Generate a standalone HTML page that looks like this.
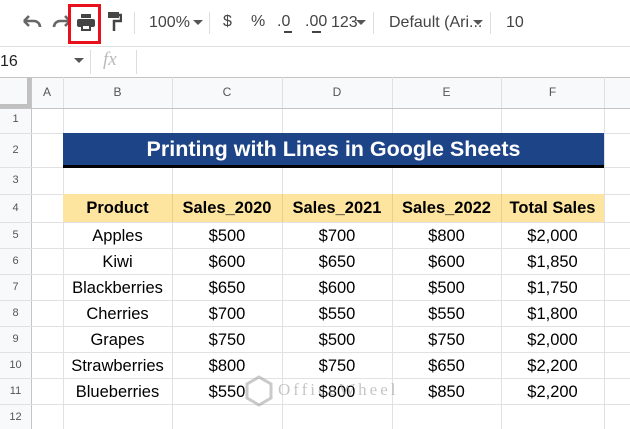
<!DOCTYPE html><html><head><style>
*{margin:0;padding:0;box-sizing:border-box}
body{width:630px;height:429px;overflow:hidden;background:#fff;font-family:"Liberation Sans",Arial,sans-serif;position:relative}
.a{position:absolute}
.tb{color:#444;font-size:16px}
.hl{position:absolute;left:0;width:630px;height:1px;background:#e1e1e1}
.vl{position:absolute;top:77px;height:352px;width:1px;background:#e1e1e1}
.rh{position:absolute;left:0;width:31px;text-align:center;font-size:11px;color:#555}
.ch{position:absolute;top:77px;height:31px;line-height:31px;text-align:center;font-size:12px;color:#555}
.c{position:absolute;text-align:center;font-size:16.5px;color:#000;height:26px;line-height:26px}
</style></head><body>
<div class="a" style="left:0;top:0;width:630px;height:47px;background:#fff;border-bottom:1px solid #e0e0e0"></div>
<svg class="a" style="left:20px;top:12px" width="80" height="22" viewBox="0 0 80 22">
<path d="M4 9 L9 4 M4 9 L9 14 M4 9 H14 a6 6 0 0 1 6 6" stroke="#666" stroke-width="2.6" fill="none"/>
<path d="M54 9 L49 4 M54 9 L49 14 M54 9 H44 a6 6 0 0 0 -6 6" stroke="#666" stroke-width="2.6" fill="none" transform="translate(-4,0)"/>
</svg>
<div class="a" style="left:68px;top:4px;width:33px;height:40px;border:3px solid #e8111b"></div>
<svg class="a" style="left:76px;top:13px" width="20" height="20" viewBox="0 0 20 20"><rect x="5" y="1" width="10" height="4" fill="#444"/><rect x="1" y="6" width="18" height="8" rx="2" fill="#444"/><rect x="5" y="11" width="10" height="7" fill="#444"/><rect x="7" y="13" width="6" height="3" fill="#fff"/></svg>
<svg class="a" style="left:108px;top:12px" width="14" height="22" viewBox="0 0 14 22"><rect x="0" y="0" width="11" height="6" fill="#444"/><path d="M11 3h2v6H6v10" stroke="#444" stroke-width="2.5" fill="none"/></svg>
<div class="a" style="left:134px;top:12px;width:1px;height:22px;background:#ddd"></div>
<div class="a tb" style="left:149px;top:14px">100%</div>
<div class="a" style="left:193px;top:20px;border:5px solid transparent;border-top-color:#555"></div>
<div class="a" style="left:209px;top:12px;width:1px;height:22px;background:#ddd"></div>
<div class="a tb" style="left:223px;top:13px">$</div>
<div class="a tb" style="left:251px;top:13px">%</div>
<div class="a tb" style="left:277px;top:13px">.0</div>
<div class="a" style="left:284px;top:31px;width:8px;height:2px;background:#444"></div>
<div class="a tb" style="left:305px;top:13px">.00</div>
<div class="a" style="left:312px;top:31px;width:9px;height:2px;background:#444"></div>
<div class="a tb" style="left:331px;top:14px">123</div>
<div class="a" style="left:356px;top:20px;border:5px solid transparent;border-top-color:#555"></div>
<div class="a" style="left:373px;top:12px;width:1px;height:22px;background:#ddd"></div>
<div class="a tb" style="left:389px;top:14px">Default (Ari...</div>
<div class="a" style="left:473px;top:20px;border:5px solid transparent;border-top-color:#555"></div>
<div class="a" style="left:490px;top:12px;width:1px;height:22px;background:#ddd"></div>
<div class="a tb" style="left:506px;top:14px">10</div>
<div class="a" style="left:0;top:53px;font-size:16px;color:#222">16</div>
<div class="a" style="left:74px;top:58px;border:5px solid transparent;border-top-color:#555"></div>
<div class="a" style="left:90px;top:50px;width:1px;height:24px;background:#ddd"></div>
<div class="a" style="left:103px;top:49px;font-size:19px;font-style:italic;color:#bbb;font-family:'Liberation Serif',serif">fx</div>
<div class="a" style="left:136px;top:50px;width:1px;height:24px;background:#ddd"></div>
<div class="a" style="left:0;top:77px;width:630px;height:1px;background:#c4c4c4"></div>
<div class="a" style="left:0;top:78px;width:630px;height:30px;background:#f8f9fa"></div>
<div class="a" style="left:0;top:78px;width:31px;height:351px;background:#f8f9fa"></div>
<div class="a" style="left:27px;top:78px;width:4px;height:30px;background:#c0c0c0"></div>
<div class="a" style="left:0;top:104px;width:31px;height:4px;background:#c0c0c0"></div>
<div class="ch" style="left:31px;width:32px">A</div><div class="ch" style="left:63px;width:109px">B</div><div class="ch" style="left:172px;width:110px">C</div><div class="ch" style="left:282px;width:110px">D</div><div class="ch" style="left:392px;width:109px">E</div><div class="ch" style="left:501px;width:103px">F</div>
<div class="vl" style="left:31px;background:#c4c4c4"></div><div class="vl" style="left:63px"></div><div class="vl" style="left:172px"></div><div class="vl" style="left:282px"></div><div class="vl" style="left:392px"></div><div class="vl" style="left:501px"></div><div class="vl" style="left:604px"></div>
<div class="hl" style="top:108px;background:#c4c4c4"></div>
<div class="hl" style="top:133px"></div><div class="hl" style="top:167px"></div><div class="hl" style="top:194px"></div><div class="hl" style="top:222px"></div><div class="hl" style="top:248px"></div><div class="hl" style="top:274px"></div><div class="hl" style="top:300px"></div><div class="hl" style="top:326px"></div><div class="hl" style="top:352px"></div><div class="hl" style="top:378px"></div><div class="hl" style="top:404px"></div>
<div class="rh" style="top:113px">1</div><div class="rh" style="top:144px">2</div><div class="rh" style="top:174px">3</div><div class="rh" style="top:202px">4</div><div class="rh" style="top:229px">5</div><div class="rh" style="top:255px">6</div><div class="rh" style="top:281px">7</div><div class="rh" style="top:307px">8</div><div class="rh" style="top:333px">9</div><div class="rh" style="top:359px">10</div><div class="rh" style="top:385px">11</div><div class="rh" style="top:411px">12</div>
<div class="a" style="left:63px;top:133px;width:541px;height:32px;background:#1e4488;color:#fff;font-weight:bold;font-size:21.5px;line-height:33px;text-align:center">Printing with Lines in Google Sheets</div>
<div class="a" style="left:63px;top:165px;width:541px;height:3px;background:#000"></div>
<div class="a" style="left:63px;top:194px;width:541px;height:28px;background:#fde5a0"></div>
<div class="a" style="left:172px;top:194px;width:1px;height:28px;background:#e8cf90"></div><div class="a" style="left:282px;top:194px;width:1px;height:28px;background:#e8cf90"></div><div class="a" style="left:392px;top:194px;width:1px;height:28px;background:#e8cf90"></div><div class="a" style="left:501px;top:194px;width:1px;height:28px;background:#e8cf90"></div>
<div class="c" style="left:63px;top:195px;width:109px;font-weight:bold">Product</div>
<div class="c" style="left:172px;top:195px;width:110px;font-weight:bold">Sales_2020</div>
<div class="c" style="left:282px;top:195px;width:110px;font-weight:bold">Sales_2021</div>
<div class="c" style="left:392px;top:195px;width:109px;font-weight:bold">Sales_2022</div>
<div class="c" style="left:501px;top:195px;width:103px;font-weight:bold">Total Sales</div>
<div class="c" style="left:63px;top:223px;width:109px">Apples</div><div class="c" style="left:172px;top:223px;width:110px">$500</div><div class="c" style="left:282px;top:223px;width:110px">$700</div><div class="c" style="left:392px;top:223px;width:109px">$800</div><div class="c" style="left:501px;top:223px;width:103px">$2,000</div>
<div class="c" style="left:63px;top:249px;width:109px">Kiwi</div><div class="c" style="left:172px;top:249px;width:110px">$600</div><div class="c" style="left:282px;top:249px;width:110px">$650</div><div class="c" style="left:392px;top:249px;width:109px">$600</div><div class="c" style="left:501px;top:249px;width:103px">$1,850</div>
<div class="c" style="left:63px;top:275px;width:109px">Blackberries</div><div class="c" style="left:172px;top:275px;width:110px">$650</div><div class="c" style="left:282px;top:275px;width:110px">$600</div><div class="c" style="left:392px;top:275px;width:109px">$500</div><div class="c" style="left:501px;top:275px;width:103px">$1,750</div>
<div class="c" style="left:63px;top:301px;width:109px">Cherries</div><div class="c" style="left:172px;top:301px;width:110px">$700</div><div class="c" style="left:282px;top:301px;width:110px">$550</div><div class="c" style="left:392px;top:301px;width:109px">$550</div><div class="c" style="left:501px;top:301px;width:103px">$1,800</div>
<div class="c" style="left:63px;top:327px;width:109px">Grapes</div><div class="c" style="left:172px;top:327px;width:110px">$750</div><div class="c" style="left:282px;top:327px;width:110px">$500</div><div class="c" style="left:392px;top:327px;width:109px">$750</div><div class="c" style="left:501px;top:327px;width:103px">$2,000</div>
<div class="c" style="left:63px;top:353px;width:109px">Strawberries</div><div class="c" style="left:172px;top:353px;width:110px">$800</div><div class="c" style="left:282px;top:353px;width:110px">$750</div><div class="c" style="left:392px;top:353px;width:109px">$650</div><div class="c" style="left:501px;top:353px;width:103px">$2,200</div>
<div class="c" style="left:63px;top:379px;width:109px">Blueberries</div><div class="c" style="left:172px;top:379px;width:110px">$550</div><div class="c" style="left:282px;top:379px;width:110px">$800</div><div class="c" style="left:392px;top:379px;width:109px">$850</div><div class="c" style="left:501px;top:379px;width:103px">$2,200</div>
<svg class="a" style="left:245px;top:375px" width="28" height="32" viewBox="0 0 28 32"><path d="M14 2 L26 9 V23 L14 30 L2 23 V9 Z" stroke="rgba(150,150,150,0.5)" stroke-width="3" fill="none"/></svg>
<div class="a" style="left:278px;top:380px;font-size:17px;letter-spacing:3px;color:rgba(150,150,150,0.55);font-family:'Liberation Serif',serif">OfficeWheel</div>
</body></html>
